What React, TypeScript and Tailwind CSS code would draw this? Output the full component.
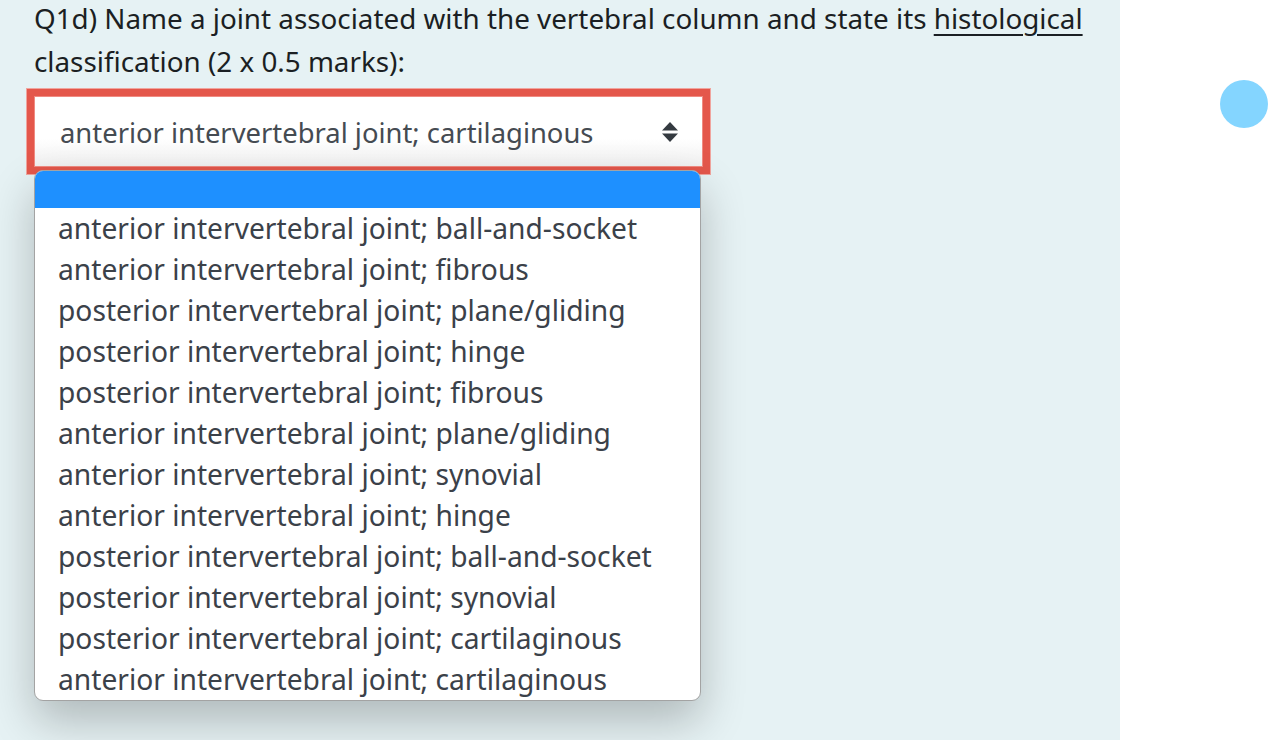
import React from "react";

const options = [
  "anterior intervertebral joint; ball-and-socket",
  "anterior intervertebral joint; fibrous",
  "posterior intervertebral joint; plane/gliding",
  "posterior intervertebral joint; hinge",
  "posterior intervertebral joint; fibrous",
  "anterior intervertebral joint; plane/gliding",
  "anterior intervertebral joint; synovial",
  "anterior intervertebral joint; hinge",
  "posterior intervertebral joint; ball-and-socket",
  "posterior intervertebral joint; synovial",
  "posterior intervertebral joint; cartilaginous",
  "anterior intervertebral joint; cartilaginous",
];

export default function App() {
  return (
    <div
      className="flex h-[740px] w-full overflow-hidden bg-white"
      style={{ fontFamily: '"Noto Sans", "Open Sans", sans-serif' }}
    >
      <div className="relative w-[1120px] shrink-0 bg-[#e6f2f4] pl-[34px]">
        <div className="whitespace-nowrap text-[27.8px] leading-[36px] text-[#1b1f23]">
          <p>
            Q1d) Name a joint associated with the vertebral column and state its{" "}
            <span className="underline underline-offset-[5px] decoration-[1.5px]">histological</span>
          </p>
          <p className="mt-[7px]">classification (2 x 0.5 marks):</p>
        </div>
        <div className="relative mt-[10px] ml-[-7px] w-[683px]">
          <div className="border-[7px] border-[#e4574b] ring-1 ring-[#f0a59e]">
            <div className="flex h-[71px] items-center justify-between border border-[#f08b82] bg-gradient-to-b from-white from-60% to-[#f1f1f1] pl-[25px] pr-[24px] pt-[3px] text-[27.4px] text-[#454b52]">
              <span>anterior intervertebral joint; cartilaginous</span>
              <svg width="16" height="20" viewBox="0 0 16 20" className="mt-[-3px] text-[#343a40]">
                <path d="M8 0 L16 8.5 L0 8.5 Z" fill="currentColor" />
                <path d="M0 11.5 L16 11.5 L8 20 Z" fill="currentColor" />
              </svg>
            </div>
          </div>
          <div className="absolute left-[7px] top-[81px] z-10 w-[667px] overflow-hidden rounded-[9px] border border-[#a3a3a3] bg-white shadow-[0_20px_45px_rgba(0,0,0,0.24)]">
            <div className="h-[37px] bg-[#1e90ff]" />
            <ul>
              {options.map((o) => (
                <li
                  key={o}
                  className="h-[41px] whitespace-nowrap pl-[23px] text-[28.2px] leading-[41px] text-[#3b4149]"
                >
                  {o}
                </li>
              ))}
            </ul>
          </div>
        </div>
      </div>
      <div className="relative flex-1">
        <div className="absolute left-[100px] top-[80px] h-[48px] w-[48px] rounded-full bg-[#84d5ff]" />
      </div>
    </div>
  );
}
